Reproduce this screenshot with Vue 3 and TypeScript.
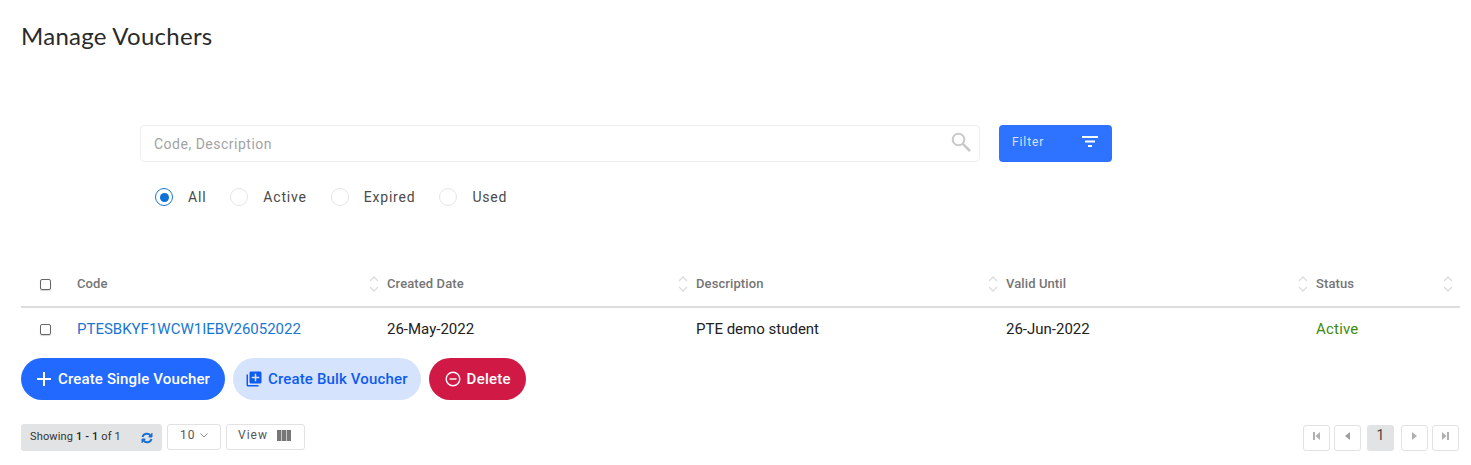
<script setup lang="ts">
const filters = [
  { label: 'All', checked: true },
  { label: 'Active', checked: false },
  { label: 'Expired', checked: false },
  { label: 'Used', checked: false },
]
const columns = ['Code', 'Created Date', 'Description', 'Valid Until', 'Status']
</script>

<template>
  <div class="page">
    <h1 class="title">Manage Vouchers</h1>

    <div class="search-area">
      <div class="search-row">
        <div class="search-box">
          <span class="placeholder">Code, Description</span>
          <svg class="search-icon" width="20" height="20" viewBox="0 0 20 20" fill="none" stroke="#c9c9c9">
            <circle cx="7.5" cy="7.500" r="5.800" stroke-width="2" />
            <path d="M11.800 11.800 L19 19" stroke-width="2.600" />
          </svg>
        </div>
        <button class="filter-btn">
          <span>Filter</span>
          <svg width="16" height="11" viewBox="0 0 16 11" fill="#fff">
            <rect x="0" y="0" width="16" height="2" />
            <rect x="3" y="4.500" width="10" height="2" />
            <rect x="6" y="9" width="4" height="2" />
          </svg>
        </button>
      </div>
      <div class="radios">
        <label v-for="f in filters" :key="f.label" class="radio-item">
          <span class="radio" :class="{ checked: f.checked }"></span>
          <span>{{ f.label }}</span>
        </label>
      </div>
    </div>

    <div class="table">
      <div class="row head">
        <div class="cell check"><span class="box"></span></div>
        <div v-for="c in columns" :key="c" class="cell">
          <span class="head-label">{{ c }}</span>
          <svg class="sort" width="10" height="18" viewBox="0 0 10 18" fill="none" stroke="#dcdcdc" stroke-width="1.300">
            <path d="M1 6 L5 2 L9 6" />
            <path d="M1 12 L5 16 L9 12" />
          </svg>
        </div>
      </div>
      <div class="row body">
        <div class="cell check"><span class="box"></span></div>
        <div class="cell link">PTESBKYF1WCW1IEBV26052022</div>
        <div class="cell">26-May-2022</div>
        <div class="cell">PTE demo student</div>
        <div class="cell">26-Jun-2022</div>
        <div class="cell active">Active</div>
      </div>
    </div>

    <div class="actions">
      <button class="pill primary">
        <svg width="16" height="16" viewBox="0 0 16 16" stroke="#fff" stroke-width="2" fill="none">
          <path d="M8 1 V15 M1 8 H15" />
        </svg>
        Create Single Voucher
      </button>
      <button class="pill soft">
        <svg width="18" height="18" viewBox="0 0 24 24" fill="#0f5bf0">
          <path d="M4 6H2v14c0 1.100.9 2 2 2h14v-2H4V6zm16-4H8c-1.100 0-2 .9-2 2v12c0 1.100.9 2 2 2h12c1.100 0 2-.9 2-2V4c0-1.100-.9-2-2-2zm-1 9h-4v4h-2v-4H9V9h4V5h2v4h4v2z" />
        </svg>
        Create Bulk Voucher
      </button>
      <button class="pill danger">
        <svg width="16" height="16" viewBox="0 0 16 16" stroke="#fff" stroke-width="1.400" fill="none">
          <circle cx="8" cy="8" r="6.800" />
          <path d="M4.500 8 H11.500" />
        </svg>
        Delete
      </button>
    </div>

    <div class="footer">
      <div class="footer-left">
        <div class="showing">
          <span>Showing <b>1 - 1</b> of 1</span>
          <svg width="12" height="12" viewBox="0 0 12 12" fill="none" stroke="#1a6fd0" stroke-width="2">
            <path d="M1.500 5 A4.600 4.600 0 0 1 9.600 3.600" />
            <path d="M10.500 7 A4.600 4.600 0 0 1 2.400 8.400" />
            <path d="M11 1 V5 H7.500" stroke-width="1" fill="#1a6fd0" />
            <path d="M1 11 V7 H4.500" stroke-width="1" fill="#1a6fd0" />
          </svg>
        </div>
        <button class="tool per-page">
          <span>10</span>
          <svg width="8" height="5" viewBox="0 0 8 5" fill="none" stroke="#888" stroke-width="1">
            <path d="M0.500 0.500 L4 4 L7.500 0.500" />
          </svg>
        </button>
        <button class="tool view">
          <span>View</span>
          <svg width="14" height="11" viewBox="0 0 14 11" fill="#777">
            <rect x="0" y="0" width="4.300" height="11" />
            <rect x="4.850" y="0" width="4.300" height="11" />
            <rect x="9.700" y="0" width="4.300" height="11" />
          </svg>
        </button>
      </div>
      <div class="pager">
        <button class="page-btn">
          <svg width="7" height="8" viewBox="0 0 7 8" fill="#b0b0b0"><rect x="0" y="0" width="2" height="8" /><path d="M7 0 V8 L2.500 4 Z" /></svg>
        </button>
        <button class="page-btn">
          <svg width="5" height="8" viewBox="0 0 5 8" fill="#a0a0a0"><path d="M5 0 V8 L0 4 Z" /></svg>
        </button>
        <button class="page-btn current">1</button>
        <button class="page-btn">
          <svg width="5" height="8" viewBox="0 0 5 8" fill="#b0b0b0"><path d="M0 0 V8 L5 4 Z" /></svg>
        </button>
        <button class="page-btn">
          <svg width="7" height="8" viewBox="0 0 7 8" fill="#b0b0b0"><rect x="5" y="0" width="2" height="8" /><path d="M0 0 V8 L4.500 4 Z" /></svg>
        </button>
      </div>
    </div>
  </div>
</template>

<style scoped>
.page {
  width: 1471px;
  height: 465px;
  box-sizing: border-box;
  padding: 0 11px 0 21px;
  font-family: Roboto, "Liberation Sans", sans-serif;
  background: #fff;
  overflow: hidden;
}

.title {
  margin: 0;
  padding-top: 21px;
  height: 125px;
  box-sizing: border-box;
  font-family: Lato, sans-serif;
  font-size: 24px;
  line-height: 30px;
  font-weight: 400;
  letter-spacing: 0.27px;
  color: #2a2a2a;
}

.search-area {
  padding-left: 119px;
  height: 137px;
}

.search-row {
  display: flex;
  gap: 19px;
}

.search-box {
  width: 840px;
  height: 37px;
  box-sizing: border-box;
  border: 1px solid #eeeeee;
  border-radius: 4px;
  padding: 0 8px 0 13px;
  display: flex;
  align-items: center;
  justify-content: space-between;
}

.placeholder {
  font-size: 14px;
  letter-spacing: 0.5px;
  color: #a3a3a3;
}

.search-icon {
  margin-top: -3px;
}

.filter-btn {
  width: 113px;
  height: 37px;
  border: none;
  border-radius: 4px;
  background: #2e73ff;
  color: #d5e2fb;
  font-family: inherit;
  font-size: 12px;
  letter-spacing: 0.9px;
  padding: 0 14px 4px 13px;
  display: flex;
  align-items: center;
  justify-content: space-between;
}

.radios {
  display: flex;
  gap: 24px;
  padding: 26px 0 0 15px;
}

.radio-item {
  display: flex;
  align-items: center;
  gap: 15px;
  font-size: 14px;
  letter-spacing: 0.8px;
  color: #4a4a4a;
  height: 18px;
}

.radio {
  width: 18px;
  height: 18px;
  box-sizing: border-box;
  border: 1px solid #e6e6e6;
  border-radius: 50%;
  position: relative;
}

.radio.checked {
  border-color: #1976d2;
}

.radio.checked::after {
  content: '';
  position: absolute;
  left: 3.500px;
  top: 3.500px;
  width: 9px;
  height: 9px;
  border-radius: 50%;
  background: #0d6fd8;
}

.row {
  display: grid;
  grid-template-columns: 46px 310px 309px 310px 310px 154px;
  align-items: center;
}

.head {
  height: 44px;
  border-bottom: 2px solid #dddddd;
  font-size: 13px;
  letter-spacing: 0.1px;
  font-weight: 500;
  color: #757575;
}

.head-label {
  margin-bottom: 2px;
}

.body {
  height: 42px;
  font-size: 15px;
  color: #212121;
}

.cell {
  padding-left: 10px;
  display: flex;
  align-items: center;
  justify-content: space-between;
  min-width: 0;
}

.cell.check {
  padding-left: 19px;
  justify-content: flex-start;
}

.sort {
  margin-right: -2px;
  margin-left: auto;
}

.head .cell:last-child {
  padding-right: 9px;
}

.box {
  width: 11px;
  height: 11px;
  box-sizing: border-box;
  border: 1px solid #666;
  border-radius: 2px;
  box-shadow: 0 1px 1px rgba(0, 0, 0, 0.18);
  background: #fff;
}

.link {
  color: #1976d2;
}

.active {
  color: #3d8a0c;
  letter-spacing: 0.2px;
}

.actions {
  display: flex;
  gap: 8px;
  padding-top: 8px;
}

.pill {
  height: 42px;
  border: none;
  border-radius: 21px;
  padding: 0 15px;
  display: flex;
  align-items: center;
  gap: 6px;
  font-family: inherit;
  font-size: 15px;
  letter-spacing: 0.15px;
  font-weight: 500;
}

.primary {
  background: #2269ff;
  color: #fff;
}

.soft {
  background: #d6e3fd;
  color: #0f5bf0;
  padding: 0 13px 0 12px;
  gap: 5px;
}

.danger {
  background: #d01a45;
  color: #fff;
  padding: 0 15px 0 16px;
  letter-spacing: 0.25px;
}

.footer {
  display: flex;
  justify-content: space-between;
  align-items: center;
  padding-top: 24px;
}

.footer-left {
  display: flex;
  gap: 5px;
}

.showing {
  width: 141px;
  height: 27px;
  box-sizing: border-box;
  padding: 0 9px 2px;
  background: #e2e3e5;
  border-radius: 3px;
  display: flex;
  align-items: center;
  justify-content: space-between;
  font-size: 11px;
  letter-spacing: 0.15px;
  color: #333;
}

.showing svg {
  margin-top: 2px;
}

.showing b {
  font-weight: 500;
  color: #222;
}

.tool {
  height: 26px;
  box-sizing: border-box;
  border: 1px solid #e2e2e2;
  border-radius: 3px;
  background: #fff;
  display: flex;
  align-items: center;
  font-family: inherit;
  font-size: 12px;
  letter-spacing: 1px;
  color: #555;
  padding: 0 11px 4px;
}

.per-page {
  width: 54px;
  gap: 4px;
  padding-left: 12px;
}

.view {
  width: 79px;
  gap: 9px;
}

.pager {
  display: flex;
  gap: 4px;
  padding-right: 1px;
}

.page-btn {
  width: 27px;
  height: 26px;
  box-sizing: border-box;
  border: 1px solid #e2e2e2;
  border-radius: 3px;
  background: #fff;
  display: flex;
  align-items: center;
  justify-content: center;
  padding: 0 0 4px;
  font-family: inherit;
  font-size: 14px;
  color: #444;
}

.page-btn.current {
  border: none;
  background: #e2e3e5;
  margin: 0 3px 0 2px;
  padding-bottom: 6px;
}
</style>

<style>
html,
body {
  margin: 0;
  background: #fff;
}
</style>
